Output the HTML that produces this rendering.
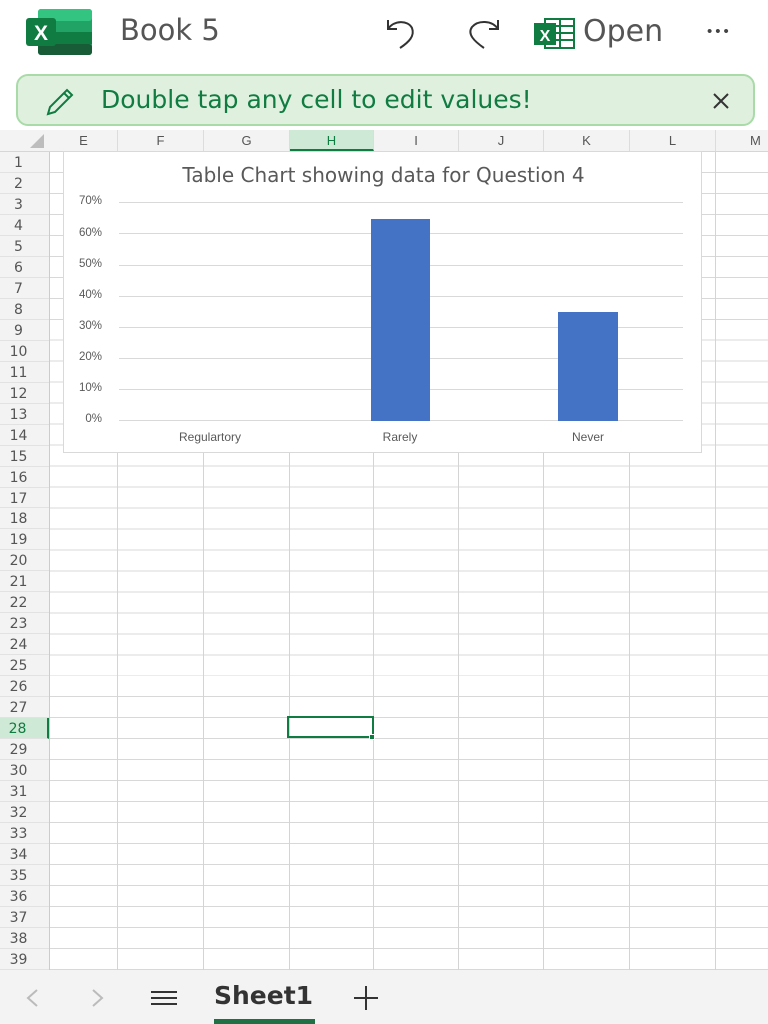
<!DOCTYPE html>
<html><head><meta charset="utf-8"><style>
*{margin:0;padding:0;box-sizing:border-box}
body{width:768px;height:1024px;overflow:hidden;background:#fff;font-family:"Liberation Sans","DejaVu Sans",sans-serif;position:relative}
.abs{position:absolute}
#top{left:0;top:0;width:768px;height:68px;background:#fff}
#banner{left:16px;top:74px;width:739px;height:52px;background:#dff0df;border:2px solid #a8dba8;border-radius:12px}
#hdr{left:0;top:130px;width:768px;height:22px;background:#f3f3f3;border-bottom:1px solid #d6d6d6}
.col{position:absolute;top:0;height:21px;font-size:13px;color:#555;text-align:center;line-height:21px;border-right:1px solid #dcdcdc}
#rows{left:0;top:152px;width:50px;height:818px;background:#f3f3f3;border-right:1px solid #ccc}
.rn{height:20.97px;line-height:22px;font-size:14px;color:#555;text-align:center;font-family:"DejaVu Sans",sans-serif;padding-right:12px;border-bottom:1px solid #e2e2e2}
#grid{left:50px;top:152px;width:718px;height:818px;
background-image:
linear-gradient(to right,transparent 67px,#d4d4d4 67px,#d4d4d4 68px,transparent 68px,transparent 153px,#d4d4d4 153px,#d4d4d4 154px,transparent 154px,transparent 239px,#d4d4d4 239px,#d4d4d4 240px,transparent 240px,transparent 323px,#d4d4d4 323px,#d4d4d4 324px,transparent 324px,transparent 408px,#d4d4d4 408px,#d4d4d4 409px,transparent 409px,transparent 493px,#d4d4d4 493px,#d4d4d4 494px,transparent 494px,transparent 579px,#d4d4d4 579px,#d4d4d4 580px,transparent 580px,transparent 665px,#d4d4d4 665px,#d4d4d4 666px,transparent 666px),
repeating-linear-gradient(to bottom,transparent 0,transparent 19.97px,#d8d8d8 19.97px,#d8d8d8 20.97px)}
#chart{left:63px;top:151px;width:639px;height:302px;background:#fff;border:1px solid #d9d9d9}
.gl{position:absolute;left:55px;width:564px;height:1px;background:#d9d9d9}
.yl{position:absolute;left:0;width:38px;text-align:right;font-size:11.5px;color:#595959}
#tabs{left:0;top:970px;width:768px;height:54px;background:#f3f3f3}
</style></head><body>
<div id="top" class="abs">
  <svg class="abs" style="left:26px;top:9px" width="66" height="46" viewBox="0 0 66 46">
    <rect x="12" y="0" width="54" height="46" rx="3" fill="#21a366"/>
    <rect x="12" y="0" width="54" height="12" rx="3" fill="#33c481"/>
    <rect x="39" y="12" width="27" height="11" fill="#21a366"/>
    <rect x="12" y="23" width="54" height="12" fill="#107c41"/>
    <rect x="12" y="35" width="54" height="11" rx="3" fill="#185c37"/>
    <rect x="0" y="9" width="30" height="28" rx="3" fill="#107c41"/>
    <text x="15" y="31" font-size="21" font-weight="bold" fill="#fff" text-anchor="middle" font-family="Liberation Sans">X</text>
  </svg>
  <div class="abs" style="left:120px;top:13px;font-size:29px;color:#555;font-family:'DejaVu Sans',sans-serif">Book 5</div>
  <svg class="abs" style="left:384px;top:16px" width="36" height="34" viewBox="0 0 36 34" fill="none" stroke="#333" stroke-width="2">
    <path d="M4 4 V13 H13"/><path d="M4 13 C10 4 24 4 28 12 C31 20 25 26 16 32"/>
  </svg>
  <svg class="abs" style="left:464px;top:16px" width="38" height="34" viewBox="0 0 38 34" fill="none" stroke="#333" stroke-width="2">
    <path d="M34 4 V13 H25"/><path d="M34 13 C28 4 14 4 8 11 C3 18 10 25 20 32"/>
  </svg>
  <svg class="abs" style="left:534px;top:18px" width="42" height="32" viewBox="0 0 42 32">
    <rect x="11" y="1" width="29" height="29" fill="#fff" stroke="#107c41" stroke-width="2"/>
    <path d="M11 8 H40 M11 15 H40 M11 22 H40 M26 1 V30" stroke="#107c41" stroke-width="2"/>
    <rect x="0" y="5" width="22" height="22" fill="#107c41"/>
    <text x="11" y="23" font-size="16" font-weight="bold" fill="#fff" text-anchor="middle" font-family="Liberation Sans">X</text>
  </svg>
  <div class="abs" style="left:583px;top:14px;font-size:30px;color:#555;font-family:'DejaVu Sans',sans-serif">Open</div>
  <div class="abs" style="left:707px;top:23px;font-size:15px;color:#444;letter-spacing:3px">•••</div>
</div>
<div id="banner" class="abs">
  <svg class="abs" style="left:26px;top:10px" width="32" height="32" viewBox="0 0 32 32" fill="none" stroke="#107c41" stroke-width="2">
    <path d="M4 28 L6 21 L23 4 L28 9 L11 26 Z M20 7 L25 12"/>
  </svg>
  <div class="abs" style="left:83px;top:9px;font-size:25px;color:#107c41;font-family:'DejaVu Sans',sans-serif">Double tap any cell to edit values!</div>
  <svg class="abs" style="left:694px;top:16px" width="18" height="18" viewBox="0 0 18 18" stroke="#333" stroke-width="2"><path d="M2 2 L16 16 M16 2 L2 16"/></svg>
</div>
<div id="hdr" class="abs">
  <svg class="abs" style="left:30px;top:4px" width="14" height="14"><path d="M14 0 V14 H0 Z" fill="#bdbdbd"/></svg>
  <div class="col" style="left:50px;width:68px">E</div>
  <div class="col" style="left:118px;width:86px">F</div>
  <div class="col" style="left:204px;width:86px">G</div>
  <div class="col" style="left:290px;width:84px;background:#cfe9d7;color:#107c41;border-bottom:2px solid #107c41">H</div>
  <div class="col" style="left:374px;width:85px">I</div>
  <div class="col" style="left:459px;width:85px">J</div>
  <div class="col" style="left:544px;width:86px">K</div>
  <div class="col" style="left:630px;width:86px">L</div>
  <div class="col" style="left:716px;width:80px;text-align:left;padding-left:34px">M</div>
</div>
<div id="rows" class="abs">
<div class="rn">1</div><div class="rn">2</div><div class="rn">3</div><div class="rn">4</div><div class="rn">5</div><div class="rn">6</div><div class="rn">7</div><div class="rn">8</div><div class="rn">9</div><div class="rn">10</div><div class="rn">11</div><div class="rn">12</div><div class="rn">13</div><div class="rn">14</div><div class="rn">15</div><div class="rn">16</div><div class="rn">17</div><div class="rn">18</div><div class="rn">19</div><div class="rn">20</div><div class="rn">21</div><div class="rn">22</div><div class="rn">23</div><div class="rn">24</div><div class="rn">25</div><div class="rn">26</div><div class="rn">27</div><div class="rn" style="background:#cfe9d7;color:#107c41;border-right:2px solid #107c41">28</div><div class="rn">29</div><div class="rn">30</div><div class="rn">31</div><div class="rn">32</div><div class="rn">33</div><div class="rn">34</div><div class="rn">35</div><div class="rn">36</div><div class="rn">37</div><div class="rn">38</div><div class="rn">39</div>
</div>
<div id="grid" class="abs"></div>
<div class="abs" style="left:287px;top:716px;width:87px;height:22px;border:2px solid #107c41"></div>
<div class="abs" style="left:369px;top:734px;width:6px;height:6px;background:#107c41;border:1px solid #fff"></div>
<div id="chart" class="abs">
  <div class="abs" style="left:0;top:11px;width:639px;text-align:center;font-size:20px;color:#595959;font-family:'DejaVu Sans',sans-serif">Table Chart showing data for Question 4</div>
  <div class="gl" style="top:50px"></div><div class="gl" style="top:81px"></div><div class="gl" style="top:113px"></div><div class="gl" style="top:144px"></div><div class="gl" style="top:175px"></div><div class="gl" style="top:206px"></div><div class="gl" style="top:237px"></div><div class="gl" style="top:268px"></div>
  <div class="yl" style="top:43px">70%</div><div class="yl" style="top:75px">60%</div><div class="yl" style="top:106px">50%</div><div class="yl" style="top:137px">40%</div><div class="yl" style="top:168px">30%</div><div class="yl" style="top:199px">20%</div><div class="yl" style="top:230px">10%</div><div class="yl" style="top:261px">0%</div>
  <div class="abs" style="left:307px;top:67px;width:59px;height:202px;background:#4472c4"></div>
  <div class="abs" style="left:494px;top:160px;width:60px;height:109px;background:#4472c4"></div>
  <div class="abs" style="left:96px;top:278px;width:100px;text-align:center;font-size:12px;color:#595959">Regulartory</div>
  <div class="abs" style="left:286px;top:278px;width:100px;text-align:center;font-size:12px;color:#595959">Rarely</div>
  <div class="abs" style="left:474px;top:278px;width:100px;text-align:center;font-size:12px;color:#595959">Never</div>
</div>
<div id="tabs" class="abs">
  <svg class="abs" style="left:24px;top:18px" width="16" height="20" fill="none" stroke="#bbb" stroke-width="2"><path d="M13 2 L4 10 L13 18"/></svg>
  <svg class="abs" style="left:90px;top:18px" width="16" height="20" fill="none" stroke="#bbb" stroke-width="2"><path d="M3 2 L12 10 L3 18"/></svg>
  <svg class="abs" style="left:150px;top:18px" width="28" height="20" stroke="#333" stroke-width="2"><path d="M1 4 H27 M1 10 H27 M1 16 H27"/></svg>
  <div class="abs" style="left:214px;top:11px;font-size:25px;font-weight:bold;color:#333;font-family:'DejaVu Sans',sans-serif">Sheet1</div>
  <div class="abs" style="left:214px;top:49px;width:101px;height:5px;background:#1e7145"></div>
  <svg class="abs" style="left:353px;top:15px" width="26" height="26" stroke="#333" stroke-width="2"><path d="M13 1 V25 M1 13 H25"/></svg>
</div>
</body></html>
